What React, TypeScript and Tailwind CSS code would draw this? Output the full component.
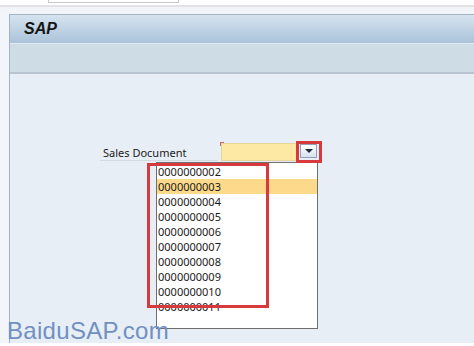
import React from "react";

const items = [
  "0000000002",
  "0000000003",
  "0000000004",
  "0000000005",
  "0000000006",
  "0000000007",
  "0000000008",
  "0000000009",
  "0000000010",
  "0000000011",
];

export default function App() {
  return (
    <div className="relative w-[474px] h-[346px] overflow-hidden bg-white font-['Noto_Sans',sans-serif]">
      {/* top strip */}
      <div className="h-[5px] bg-white pl-[48px]">
        <div className="w-[131px] h-[3px] border-x border-b border-[#c6c6c6] bg-white" />
      </div>
      <div className="h-[2px] bg-[#e3e3e3]" />
      <div className="h-[7px] bg-[#f1f5fa]" />
      {/* main */}
      <div className="flex h-[329px]">
        <div className="w-[9px] bg-[#f2f5f9]" />
        <div className="flex-1 flex flex-col border-l border-t border-[#a3b3c4]">
          <div className="h-[28px] bg-gradient-to-b from-[#d6e3ef] to-[#aac3da] flex items-center pl-[14px]">
            <span className="font-['Liberation_Sans',sans-serif] font-bold italic text-[16px] leading-none text-[#161616]">
              SAP
            </span>
          </div>
          <div className="h-px bg-[#e2ebf3]" />
          <div className="h-[30px] bg-[#cedce6] border-b-2 border-[#b7c4d0]" />
          <div className="flex-1 bg-[#e7eef6] pt-[68px] pl-[90px]">
            <div className="flex items-start">
              <div className="w-[118px] h-[19px] border-b border-[#d2dae3] pl-[3px] pt-[3px] text-[11px] leading-[15px] text-[#1a1a1a]">
                Sales Document
              </div>
              <div className="relative ml-[3px] mt-px w-[78px] h-[18px] bg-[#fde9a4] border border-[#e6d59a]">
                <div className="absolute left-[-2px] top-[-2px] w-[4px] h-[4px] border-l border-t border-[#c0686a]" />
              </div>
              <div className="ml-px mt-[2px] w-[17px] h-[14px] bg-gradient-to-b from-[#ffffff] to-[#d6e2ee] border border-[#8fa3b8] flex items-center justify-center">
                <div className="w-0 h-0 border-l-[4px] border-r-[4px] border-t-[4px] border-l-transparent border-r-transparent border-t-[#1d2a3a]" />
              </div>
            </div>
          </div>
        </div>
      </div>
      <div className="h-[3px] bg-white" />

      {/* dropdown list */}
      <div className="absolute left-[156px] top-[162px] w-[162px] h-[167px] bg-white border border-[#6f6f6f] pt-px">
        {items.map((it, i) => (
          <div
            key={it}
            className={
              i === 1
                ? "h-[15px] pl-[1px] text-[11px] leading-[15px] text-[#1a1a1a] bg-[#fcd98b]"
                : "h-[15px] pl-[1px] text-[11px] leading-[15px] text-[#1a1a1a]"
            }
          >
            {it}
          </div>
        ))}
      </div>

      {/* red annotation boxes */}
      <div className="absolute left-[147px] top-[163px] w-[122px] h-[145px] border-[3px] border-[#d8393d]" />
      <div className="absolute left-[296px] top-[141px] w-[26px] h-[22px] border-[3px] border-[#d8393d]" />

      {/* watermark */}
      <div className="absolute left-[7px] top-[319px] font-['Liberation_Sans',sans-serif] text-[24px] leading-[24px] tracking-[0.3px] text-[#7190c2]">
        BaiduSAP.com
      </div>
    </div>
  );
}
